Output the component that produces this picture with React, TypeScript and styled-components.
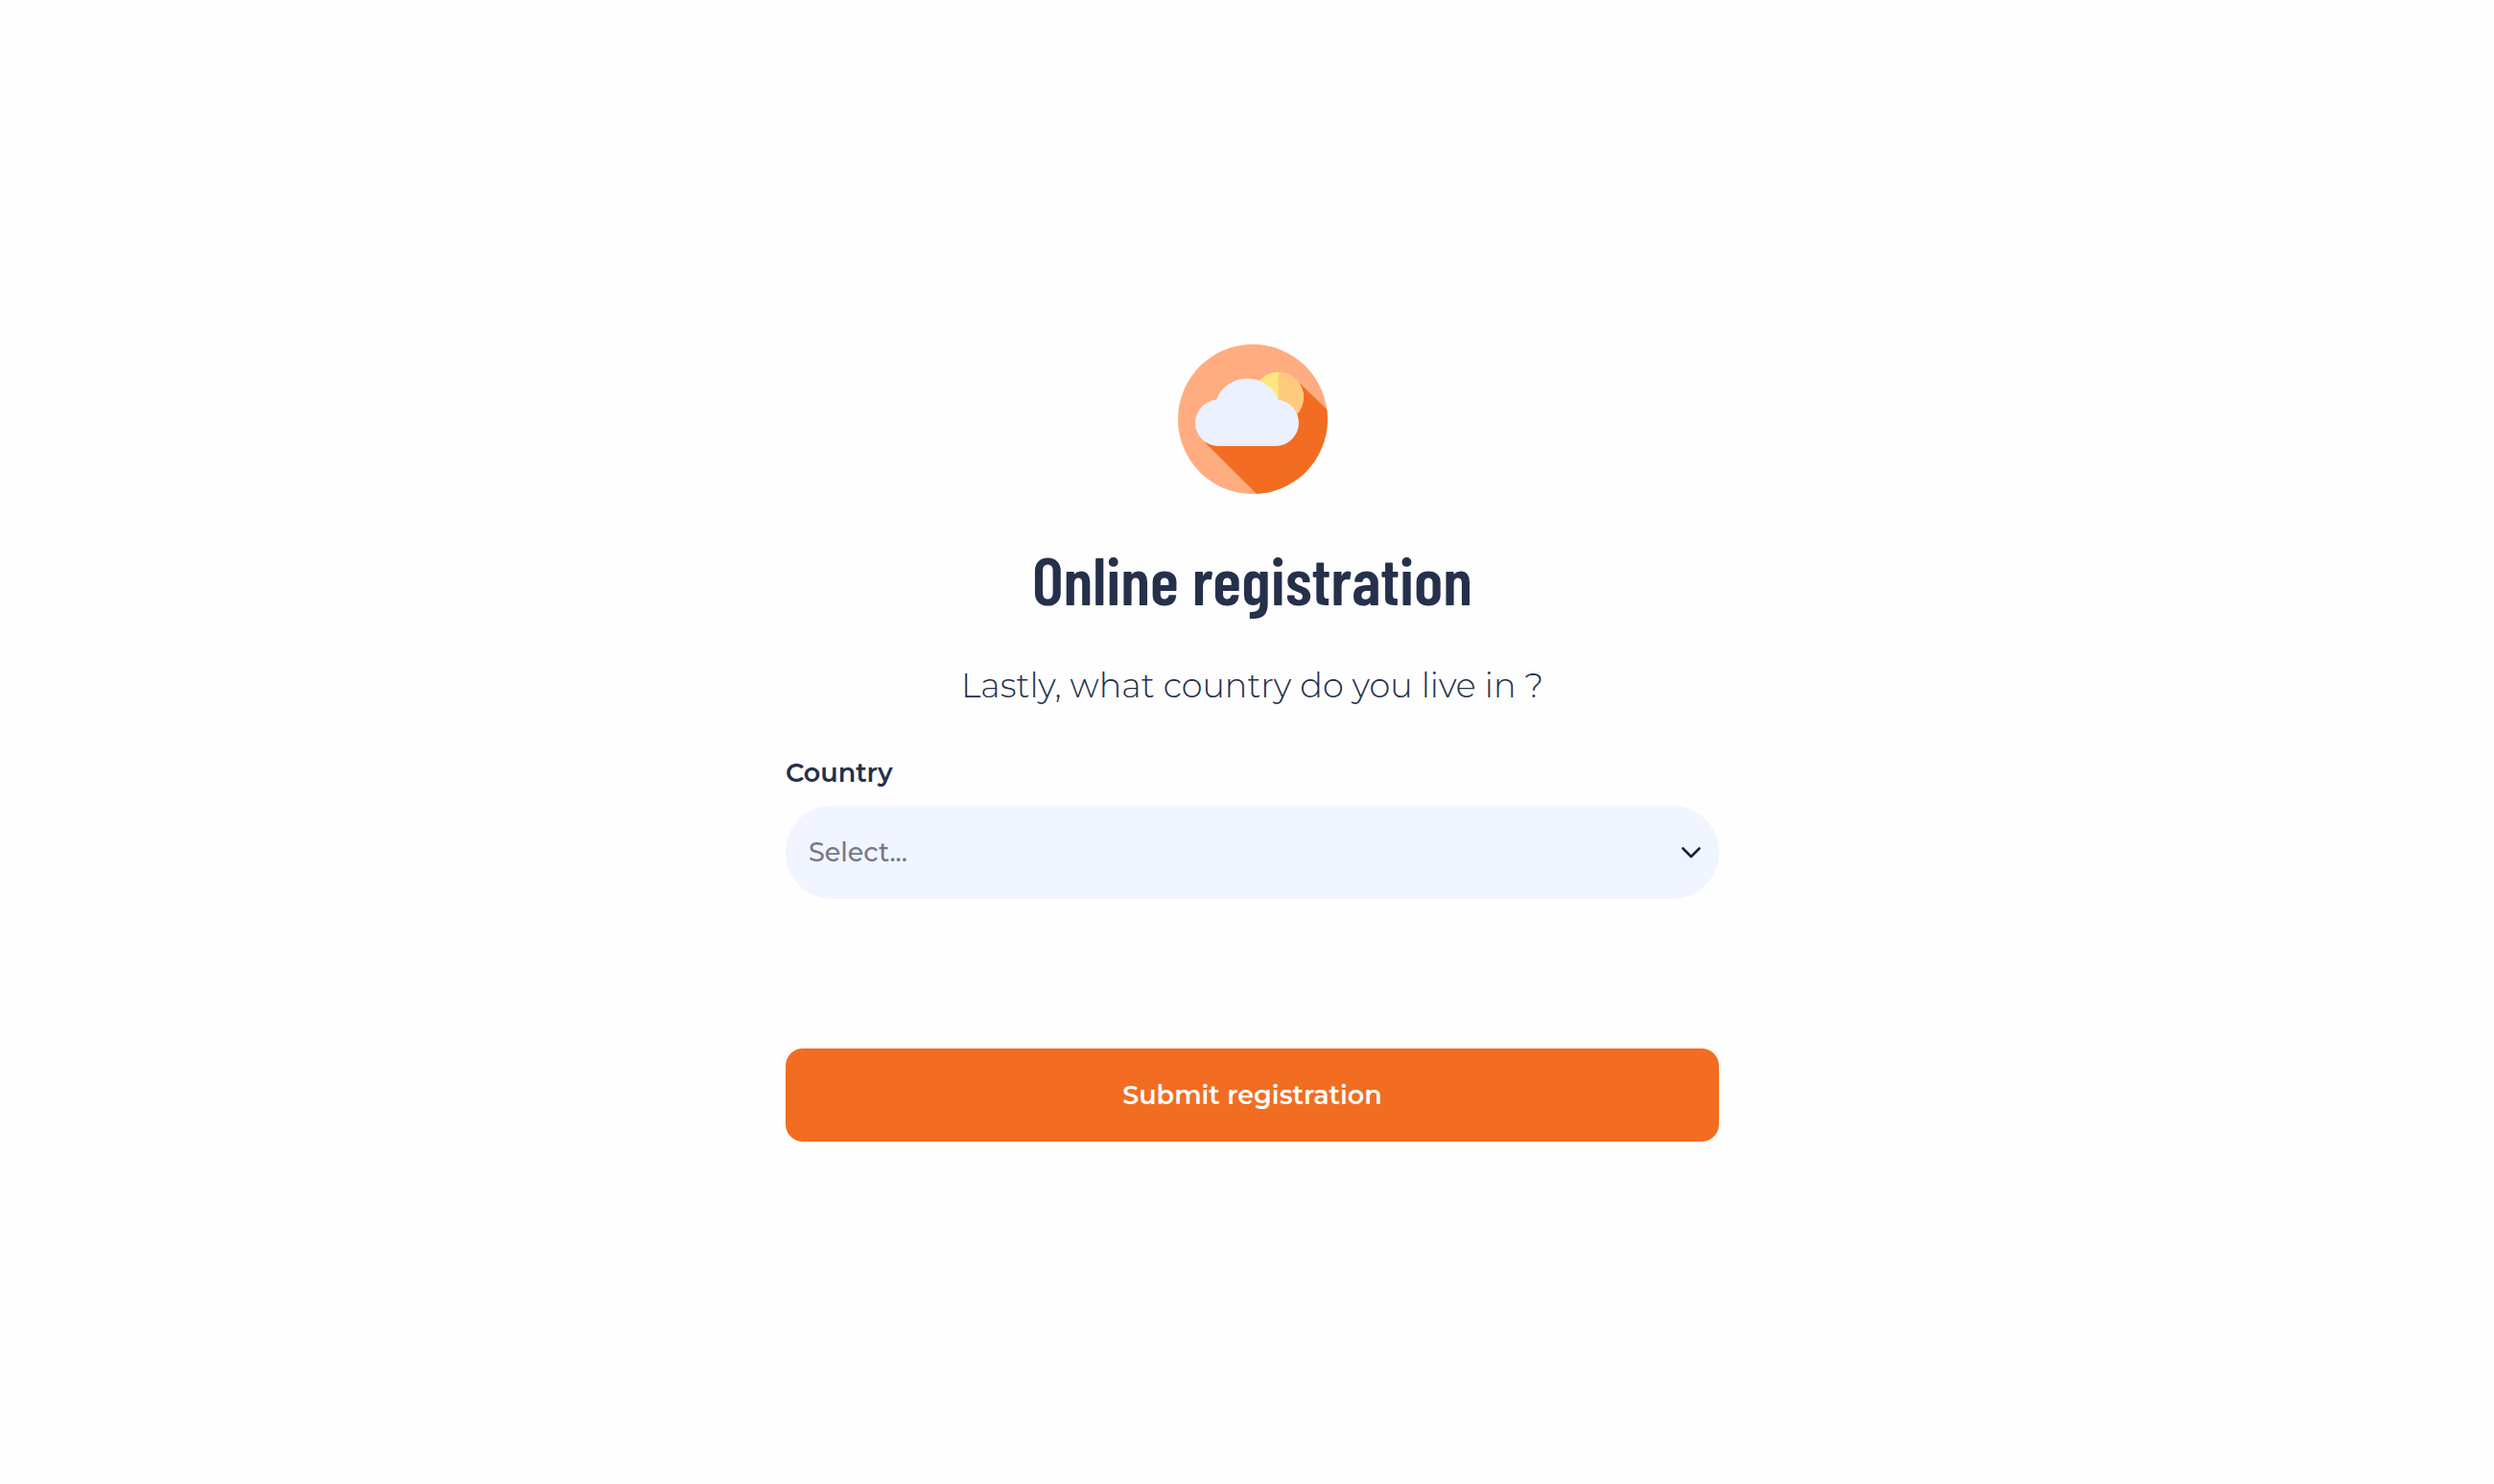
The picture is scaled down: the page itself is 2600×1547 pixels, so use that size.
import React from "react";
import styled, { createGlobalStyle } from "styled-components";

const GlobalStyle = createGlobalStyle`
  *, *::before, *::after { box-sizing: border-box; }
  body {
    margin: 0;
    background: #fefefe;
    color: #25304b;
    font-family: Montserrat, Inter, "Open Sans", sans-serif;
  }
`;

const Page = styled.main`
  min-height: 100vh;
  padding: 2px 0 0 11px;
  display: flex;
  align-items: center;
  justify-content: center;
`;

const Form = styled.form`
  width: 100%;
  max-width: 973px;
  display: flex;
  flex-direction: column;
  align-items: center;
`;

const Logo = styled.svg`
  width: 156px;
  height: 156px;
`;

const Title = styled.h1`
  margin: 44px 0 0;
  font-family: "Barlow Condensed", "Liberation Sans Narrow", "Roboto Condensed", sans-serif;
  font-size: 70px;
  font-weight: 600;
  line-height: 88px;
`;

const Question = styled.p`
  margin: 46px 0 0;
  font-size: 35px;
  font-weight: 300;
  line-height: 44px;
`;

const Field = styled.div`
  width: 100%;
  margin-top: 51px;
  display: grid;
  gap: 16px;
`;

const Label = styled.label`
  font-size: 27px;
  font-weight: 600;
  line-height: 36px;
`;

const SelectBox = styled.div`
  display: grid;
  align-items: center;
  border-radius: 48px;
  background: #f1f5ff;

  > * { grid-area: 1 / 1; }
`;

const Select = styled.select`
  width: 100%;
  height: 97px;
  padding: 0 64px 0 24px;
  border: 0;
  border-radius: 48px;
  appearance: none;
  background: transparent;
  color: #757a89;
  font: inherit;
  font-size: 27px;
  font-weight: 500;
`;

const Chevron = styled.svg`
  width: 20px;
  height: 12px;
  margin-right: 19px;
  justify-self: end;
  pointer-events: none;
`;

const Submit = styled.button`
  width: 100%;
  height: 97px;
  margin-top: 156px;
  border: 0;
  border-radius: 18px;
  background: #f26d21;
  color: #fff;
  font: inherit;
  font-size: 27px;
  font-weight: 600;
`;

const WeatherLogo = () => (
  <Logo viewBox="0 0 468 468" aria-hidden="true">
    <defs>
      <clipPath id="disc"><circle cx="234" cy="234" r="234" /></clipPath>
    </defs>
    <g clipPath="url(#disc)">
      <rect width="468" height="468" fill="#ffac80" />
      <path d="M380 121 L466 203 L500 236 V500 H278 L246 468 L84 306 L300 200 Z" fill="#f26d21" />
      <circle cx="314" cy="165" r="79" fill="#ffe77d" />
      <path d="M314 86 A79 79 0 0 1 314 244 Z" fill="#ffca7e" />
      <path
        d="M127 318 A73 73 0 0 1 54 246 A73 73 0 0 1 120 173 A104 104 0 0 1 314 173 A73 73 0 0 1 378 246 A73 73 0 0 1 305 318 Z"
        fill="#ebf1ff"
      />
    </g>
  </Logo>
);

export default function App() {
  return (
    <>
      <GlobalStyle />
      <Page>
        <Form onSubmit={(event: React.FormEvent) => event.preventDefault()}>
          <WeatherLogo />
          <Title>Online registration</Title>
          <Question>Lastly, what country do you live in ?</Question>
          <Field>
            <Label htmlFor="country">Country</Label>
            <SelectBox>
              <Select id="country" defaultValue="">
                <option value="">Select...</option>
              </Select>
              <Chevron viewBox="0 0 20 12" aria-hidden="true">
                <path d="M1.500 1.500 L10 10 L18.500 1.500" fill="none" stroke="#17213c" strokeWidth="2.600" strokeLinecap="round" strokeLinejoin="round" />
              </Chevron>
            </SelectBox>
          </Field>
          <Submit type="submit">Submit registration</Submit>
        </Form>
      </Page>
    </>
  );
}
